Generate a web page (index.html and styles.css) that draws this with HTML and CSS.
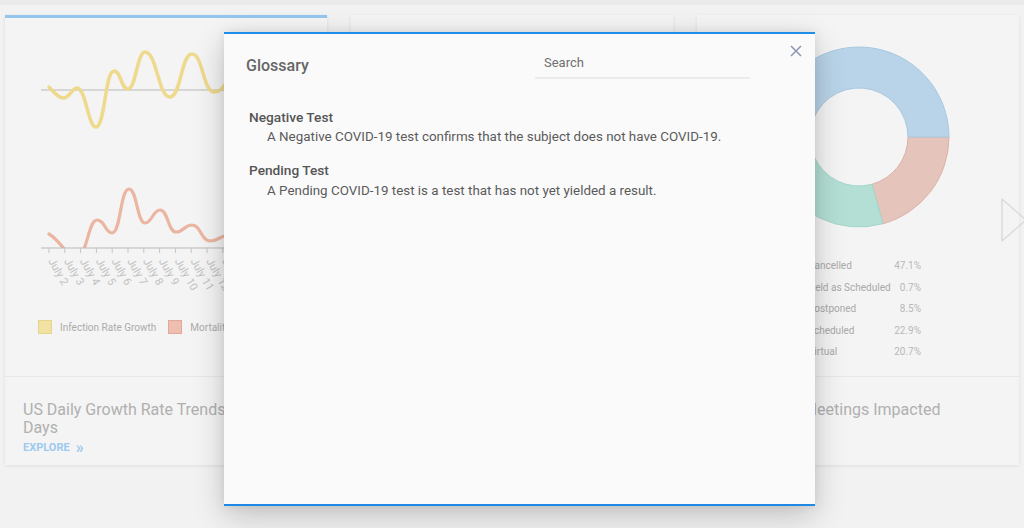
FILE: index.html
```html
<!DOCTYPE html>
<html lang="en">
<head>
<meta charset="utf-8">
<title>Glossary</title>
<link rel="stylesheet" href="styles.css">
</head>
<body>
<div class="topbar"></div>
<main class="cards">
  <section class="card card-active">
    <div class="chart-area">
      <svg class="line-chart" viewBox="5 18 322 287" width="322" height="287">
        <defs>
          <clipPath id="above-axis"><rect x="0" y="0" width="400" height="248"/></clipPath>
        </defs>
        <line x1="41" y1="90" x2="330" y2="90" class="axis"/>
        <path class="line-yellow" d="M49,87 C54,92 58,98 63,98 C70,98 72,88 77,88 C86,88 88,127 96,127 C105,127 105,71 114,71 C121,71 121,89 128,89 C136,89 137,52 145,52 C157,52 158,97 170,97 C181,97 181,54 192,54 C203,54 203,92 214,92 C222,92 226,84 232,72"/>
        <path class="line-red" clip-path="url(#above-axis)" d="M49,234 C60,240 68,258 76,258 C87,258 88,220 97,220 C105,220 105,233 112,233 C121,233 120,189 129,189 C137,189 137,223 145,223 C152,223 153,210 160,210 C168,210 168,232 176,232 C184,232 184,225 192,225 C201,225 201,241 210,241 C218,241 220,236 226,236 C232,236 234,232 240,228"/>
        <line x1="41" y1="248" x2="330" y2="248" class="axis"/>
        <g class="ticks">
          <line x1="49" y1="248" x2="49" y2="253"/><line x1="64.8" y1="248" x2="64.8" y2="253"/>
          <line x1="80.6" y1="248" x2="80.6" y2="253"/><line x1="96.4" y1="248" x2="96.4" y2="253"/>
          <line x1="112.2" y1="248" x2="112.2" y2="253"/><line x1="128" y1="248" x2="128" y2="253"/>
          <line x1="143.8" y1="248" x2="143.8" y2="253"/><line x1="159.6" y1="248" x2="159.6" y2="253"/>
          <line x1="175.4" y1="248" x2="175.4" y2="253"/><line x1="191.2" y1="248" x2="191.2" y2="253"/>
          <line x1="207" y1="248" x2="207" y2="253"/><line x1="222.8" y1="248" x2="222.8" y2="253"/>
        </g>
        <g class="xlabels">
          <text transform="translate(48,261) rotate(60)">July 2</text>
          <text transform="translate(63.8,261) rotate(60)">July 3</text>
          <text transform="translate(79.6,261) rotate(60)">July 4</text>
          <text transform="translate(95.4,261) rotate(60)">July 5</text>
          <text transform="translate(111.2,261) rotate(60)">July 6</text>
          <text transform="translate(127,261) rotate(60)">July 7</text>
          <text transform="translate(142.8,261) rotate(60)">July 8</text>
          <text transform="translate(158.6,261) rotate(60)">July 9</text>
          <text transform="translate(174.4,261) rotate(60)">July 10</text>
          <text transform="translate(190.2,261) rotate(60)">July 11</text>
          <text transform="translate(206,261) rotate(60)">July 12</text>
          <text transform="translate(221.8,261) rotate(60)">July 13</text>
        </g>
      </svg>
      <div class="legend">
        <span class="swatch swatch-yellow"></span><span class="legend-label">Infection Rate Growth</span>
        <span class="swatch swatch-red"></span><span class="legend-label">Mortality Rate Growth</span>
      </div>
    </div>
    <div class="card-footer">
      <h2 class="card-title">US Daily Growth Rate Trends Last 14<br>Days</h2>
      <a class="explore" href="#">EXPLORE <span class="chev">&raquo;</span></a>
    </div>
  </section>

  <section class="card">
    <div class="chart-area"></div>
    <div class="card-footer">
      <h2 class="card-title">Testing Overview</h2>
      <a class="explore" href="#">EXPLORE <span class="chev">&raquo;</span></a>
    </div>
  </section>

  <section class="card">
    <div class="chart-area">
      <svg class="donut" viewBox="697 15 322 235" width="322" height="235">
        <path class="seg-virtual" d="M949,137 A90,90 0 0 1 883.02,223.73 L872.08,184.22 A49,49 0 0 0 908,137 Z"/>
        <path class="seg-scheduled" d="M883.02,223.73 A90,90 0 0 1 776.17,172.23 L813.91,156.18 A49,49 0 0 0 872.08,184.22 Z"/>
        <path class="seg-postponed" d="M776.17,172.23 A90,90 0 0 1 769.78,125.16 L810.43,130.55 A49,49 0 0 0 813.91,156.18 Z"/>
        <path class="seg-held" d="M769.78,125.16 A90,90 0 0 1 770.39,121.25 L810.75,128.43 A49,49 0 0 0 810.43,130.55 Z"/>
        <path class="seg-cancelled" d="M770.39,121.25 A90,90 0 0 1 949,137 L908,137 A49,49 0 0 0 810.75,128.43 Z"/>
      </svg>
      <ul class="pie-legend">
        <li><span class="dot seg-cancelled"></span><span class="pl-label">Cancelled</span><span class="pl-val">47.1%</span></li>
        <li><span class="dot seg-held"></span><span class="pl-label">Held as Scheduled</span><span class="pl-val">0.7%</span></li>
        <li><span class="dot seg-postponed"></span><span class="pl-label">Postponed</span><span class="pl-val">8.5%</span></li>
        <li><span class="dot seg-scheduled"></span><span class="pl-label">Scheduled</span><span class="pl-val">22.9%</span></li>
        <li><span class="dot seg-virtual"></span><span class="pl-label">Virtual</span><span class="pl-val">20.7%</span></li>
      </ul>
    </div>
    <div class="card-footer">
      <h2 class="card-title">Association Meetings Impacted</h2>
    </div>
  </section>
</main>

<svg class="next-arrow" width="26" height="48" viewBox="0 0 26 48">
  <path d="M3,3 L3,45 L27,24 Z" fill="none" stroke="#dcdcdc" stroke-width="1.6" stroke-linejoin="round"/>
</svg>

<div class="modal" role="dialog" aria-label="Glossary">
  <button class="modal-close" aria-label="Close">
    <svg width="12" height="12" viewBox="0 0 12 12"><path d="M1,1 L11,11 M11,1 L1,11" stroke="#8c96b2" stroke-width="1.5" fill="none"/></svg>
  </button>
  <div class="modal-header">
    <h1 class="modal-title">Glossary</h1>
    <input class="search" type="text" placeholder="Search">
  </div>
  <dl class="glossary">
    <div class="entry">
      <dt>Negative Test</dt>
      <dd>A Negative COVID-19 test confirms that the subject does not have COVID-19.</dd>
    </div>
    <div class="entry">
      <dt>Pending Test</dt>
      <dd>A Pending COVID-19 test is a test that has not yet yielded a result.</dd>
    </div>
  </dl>
</div>
</body>
</html>
```
FILE: styles.css
```css
* { box-sizing: border-box; }
html, body {
  margin: 0;
  padding: 0;
  background: #f2f2f2;
  font-family: Roboto, "Liberation Sans", Arial, sans-serif;
  width: 1024px;
  height: 528px;
  overflow: hidden;
}
.topbar {
  height: 5px;
  background: #ebebeb;
}
.cards {
  display: grid;
  grid-template-columns: 322px 322px 322px;
  gap: 24px;
  padding: 10px 5px 0;
}
.card {
  background: #f4f4f4;
  height: 450px;
  box-shadow: 0 1px 4px rgba(0, 0, 0, 0.08);
  display: flex;
  flex-direction: column;
}
.card-active {
  border-top: 3px solid #93c5ef;
}
.chart-area {
  height: 361px;
  flex: none;
}
.card-active .chart-area { height: 358px; }
.line-chart { display: block; }
.axis { stroke: #b9b9b9; stroke-width: 1; }
.ticks line { stroke: #c4c4c4; stroke-width: 1; }
.line-yellow { fill: none; stroke: #eed98d; stroke-width: 3.5; stroke-linecap: round; }
.line-red { fill: none; stroke: #ecb5a1; stroke-width: 3.2; stroke-linecap: round; }
.xlabels text {
  font-family: Roboto, "Liberation Sans", sans-serif;
  font-size: 11px;
  fill: #c2c2c2;
}
.legend {
  display: flex;
  align-items: center;
  margin-top: 15px;
  padding-left: 33px;
  height: 14px;
  white-space: nowrap;
}
.swatch {
  width: 14px;
  height: 14px;
  flex: none;
}
.swatch-yellow { background: #f1e2a4; border: 1px solid #e7d48b; }
.swatch-red { background: #eebeb0; border: 1px solid #e4a896; margin-left: 12px; }
.legend-label {
  font-size: 10px;
  color: #ababab;
  margin-left: 8px;
}
.card-footer {
  border-top: 1px solid #e8e8e8;
  padding: 24px 18px 0;
  flex: 1;
}
.card-title {
  margin: 0;
  font-size: 16px;
  line-height: 17.5px;
  font-weight: 400;
  color: #b0b0b0;
}
.explore {
  display: inline-flex;
  align-items: center;
  margin-top: 3px;
  font-size: 11px;
  line-height: 13px;
  font-weight: 700;
  color: #9ccaf0;
  text-decoration: none;
}
.chev { font-size: 16px; line-height: 13px; margin-left: 6px; font-weight: 700; }
.donut { display: block; }
.seg-virtual { fill: #e5c4bb; stroke: #dcb2a6; }
.seg-scheduled { fill: #b4dfd5; stroke: #a3d6c9; }
.seg-postponed { fill: #f0e3ac; stroke: #e5d48f; }
.seg-held { fill: #d6c8e2; stroke: #c8b6d8; }
.seg-cancelled { fill: #b9d4e8; stroke: #a8c8e0; }
.pie-legend {
  list-style: none;
  margin: 5px 98px 0 93px;
  padding: 0;
}
.pie-legend li {
  display: flex;
  align-items: center;
  height: 21.5px;
  font-size: 10px;
  color: #a9a9a9;
}
.dot {
  width: 10px;
  height: 10px;
  margin-right: 8px;
  flex: none;
}
.pl-label { flex: 1; }
.pl-val { color: #b8b8b8; }
.next-arrow {
  position: absolute;
  left: 999px;
  top: 196px;
}
.modal {
  position: absolute;
  left: 224px;
  top: 32px;
  width: 591px;
  height: 474px;
  background: #fafafa;
  border-top: 2px solid #1e8ee8;
  border-bottom: 2px solid #1e88e5;
  box-shadow: 0 10px 30px rgba(0, 0, 0, 0.2), 0 0 10px rgba(0, 0, 0, 0.08);
}
.modal-close {
  position: absolute;
  right: 13px;
  top: 11px;
  width: 12px;
  height: 12px;
  padding: 0;
  border: 0;
  background: transparent;
  display: flex;
}
.modal-header {
  display: flex;
  justify-content: space-between;
  align-items: flex-start;
  padding: 0 65px 0 22px;
}
.modal-title {
  margin: 22px 0 0;
  font-size: 16px;
  line-height: 20px;
  font-weight: 500;
  color: #666;
}
.search {
  margin-top: 15px;
  width: 215px;
  height: 30px;
  border: 0;
  border-bottom: 2px solid #ececec;
  padding: 0 9px 2px;
  background: transparent;
  font-family: Roboto, "Liberation Sans", sans-serif;
  font-size: 13px;
  color: #666;
  outline: none;
}
.search::placeholder { color: #707070; }
.glossary {
  margin: 28.5px 0 0;
  padding: 0 25px;
}
.entry { margin-bottom: 14.5px; }
.glossary dt {
  font-size: 13.7px;
  line-height: 19.5px;
  font-weight: 500;
  color: #555;
}
.glossary dd {
  margin: 0 0 0 18px;
  font-size: 13.4px;
  line-height: 19.5px;
  color: #5a5a5a;
}
```
